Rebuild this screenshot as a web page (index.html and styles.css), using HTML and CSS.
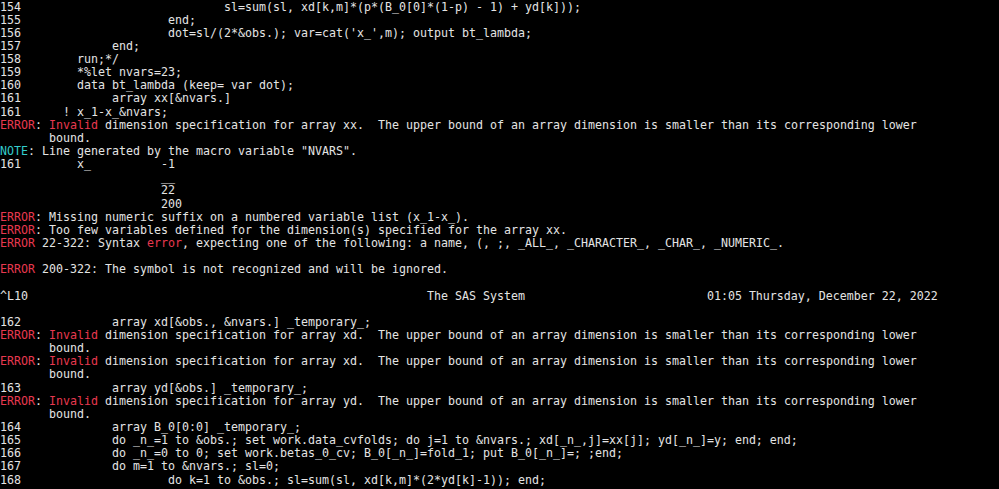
FILE: index.html
```html
<!DOCTYPE html>
<html>
<head>
<meta charset="utf-8">
<link rel="stylesheet" href="styles.css">
</head>
<body>
<pre class="log">154                             sl=sum(sl, xd[k,m]*(p*(B_0[0]*(1-p) - 1) + yd[k]));
155                     end;
156                     dot=sl/(2*&amp;obs.); var=cat('x_',m); output bt_lambda;
157             end;
158        run;*/
159        *%let nvars=23;
160        data bt_lambda (keep= var dot);
161             array xx[&amp;nvars.]
161      ! x_1-x_&amp;nvars;
<span class="err">ERROR</span>: <span class="err">Invalid</span> dimension specification for array xx.  The upper bound of an array dimension is smaller than its corresponding lower
       bound.
<span class="note">NOTE</span>: Line generated by the macro variable "NVARS".
161        x_          -1
                       __
                       22
                       200
<span class="err">ERROR</span>: Missing numeric suffix on a numbered variable list (x_1-x_).
<span class="err">ERROR</span>: Too few variables defined for the dimension(s) specified for the array xx.
<span class="err">ERROR</span> 22-322: Syntax <span class="err">error</span>, expecting one of the following: a name, (, ;, _ALL_, _CHARACTER_, _CHAR_, _NUMERIC_.

<span class="err">ERROR</span> 200-322: The symbol is not recognized and will be ignored.

^L10                                                         The SAS System                          01:05 Thursday, December 22, 2022

162             array xd[&amp;obs., &amp;nvars.] _temporary_;
<span class="err">ERROR</span>: <span class="err">Invalid</span> dimension specification for array xd.  The upper bound of an array dimension is smaller than its corresponding lower
       bound.
<span class="err">ERROR</span>: <span class="err">Invalid</span> dimension specification for array xd.  The upper bound of an array dimension is smaller than its corresponding lower
       bound.
163             array yd[&amp;obs.] _temporary_;
<span class="err">ERROR</span>: <span class="err">Invalid</span> dimension specification for array yd.  The upper bound of an array dimension is smaller than its corresponding lower
       bound.
164             array B_0[0:0] _temporary_;
165             do _n_=1 to &amp;obs.; set work.data_cvfolds; do j=1 to &amp;nvars.; xd[_n_,j]=xx[j]; yd[_n_]=y; end; end;
166             do _n_=0 to 0; set work.betas_0_cv; B_0[_n_]=fold_1; put B_0[_n_]=; ;end;
167             do m=1 to &amp;nvars.; sl=0;
168                     do k=1 to &amp;obs.; sl=sum(sl, xd[k,m]*(2*yd[k]-1)); end;</pre>
</body>
</html>
```
FILE: styles.css
```css
html, body {
  margin: 0;
  padding: 0;
  background: #000;
  height: 100%;
  overflow: hidden;
}
.log {
  margin: 0;
  padding: 0.5px 0 0 0;
  font-family: "DejaVu Sans Mono", monospace;
  font-size: 11.63px;
  line-height: 13.14px;
  color: #e4e4e4;
  white-space: pre;
}
.err {
  color: #e8384f;
}
.note {
  color: #33cccc;
}
```
